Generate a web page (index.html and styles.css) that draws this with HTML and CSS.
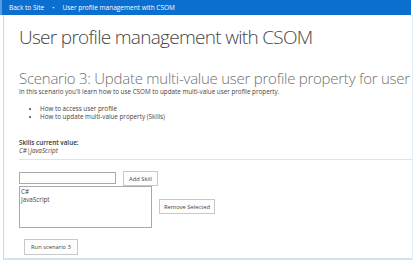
FILE: index.html
```html
<!DOCTYPE html>
<html>
<head>
<meta charset="utf-8">
<link rel="stylesheet" href="styles.css">
</head>
<body>
<div class="topbar">
  <span class="crumb">Back to Site</span>
  <span class="sep">•</span>
  <span class="crumb">User profile management with CSOM</span>
</div>
<div class="page">
  <h1 class="title">User profile management with CSOM</h1>
  <h2 class="scenario">Scenario 3: Update multi-value user profile property for user</h2>
  <p class="intro">In this scenario you'll learn how to use CSOM to update multi-value user profile property.</p>
  <ul class="points">
    <li>How to access user profile</li>
    <li>How to update multi-value property (Skills)</li>
  </ul>
  <div class="current">
    <div class="label">Skills current value:</div>
    <div class="value">C#|JavaScript</div>
  </div>
  <div class="editor">
    <div class="row">
      <input class="skill-input" type="text">
      <button class="btn">Add Skill</button>
    </div>
    <div class="row list-row">
      <div class="listbox">
        <div class="item">C#</div>
        <div class="item">JavaScript</div>
      </div>
      <button class="btn remove">Remove Selected</button>
    </div>
  </div>
  <div class="run">
    <button class="btn run-btn">Run scenario 3</button>
  </div>
</div>
</body>
</html>
```

FILE: styles.css
```css
html, body {
  margin: 0;
  padding: 0;
  background: #ffffff;
}
body {
  width: 415px;
  height: 263px;
  overflow: hidden;
  font-family: "Open Sans", "Liberation Sans", sans-serif;
  color: #444444;
}
.topbar {
  width: 402px;
  height: 15px;
  background: #0b6fcf;
  border-left: 2px solid #5a9be0;
  padding-left: 7px;
  display: flex;
  align-items: center;
  gap: 6px;
  font-size: 6.5px;
  color: #ffffff;
}
.sep {
  font-size: 6px;
  padding: 0 2px;
}
.page {
  margin-left: 3px;
  width: 393px;
  height: 243px;
  border-left: 1px solid #c3d9ef;
  border-right: 1px solid #e3eef8;
  border-bottom: 2px solid #d3e2f0;
  padding-left: 15px;
  overflow: hidden;
}
.title {
  margin: 10px 0 0 0;
  font-size: 19px;
  letter-spacing: -0.7px;
  font-weight: 300;
  line-height: 24px;
  color: #444444;
  white-space: nowrap;
}
.scenario {
  margin: 20px 0 0 0;
  font-size: 15px;
  letter-spacing: -0.25px;
  font-weight: 300;
  line-height: 18px;
  color: #6f6f6f;
  white-space: nowrap;
}
.intro {
  margin: 0;
  font-size: 6.3px;
  line-height: 9px;
  color: #444444;
}
.points {
  margin: 9px 0 0 0;
  padding-left: 21px;
  font-size: 6.3px;
  line-height: 8px;
  color: #444444;
}
.current {
  margin-top: 18px;
  padding-bottom: 4px;
  border-bottom: 1px solid #e2e2e2;
  font-size: 6.3px;
  line-height: 8px;
}
.label {
  font-weight: 600;
  color: #333333;
}
.value {
  font-style: italic;
  color: #444444;
}
.editor {
  margin-top: 11px;
  display: flex;
  flex-direction: column;
}
.row {
  display: flex;
  align-items: flex-start;
}
.skill-input {
  box-sizing: border-box;
  width: 97px;
  height: 12px;
  margin: 1px 0 0 0;
  padding: 0;
  border: 1px solid #a9a9a9;
  background: #ffffff;
}
.btn {
  box-sizing: border-box;
  font-family: "Open Sans", "Liberation Sans", sans-serif;
  font-size: 5.8px;
  color: #444444;
  background: #fdfdfd;
  border: 1px solid #c8c8c8;
  padding: 0 5px;
  height: 15px;
  margin-left: 7px;
  white-space: nowrap;
}
.listbox {
  box-sizing: border-box;
  width: 133px;
  height: 42px;
  border: 1px solid #a9a9a9;
  padding: 1px 1px;
  font-size: 6.3px;
  line-height: 8px;
}
.list-row {
  margin-top: 0;
}
.remove {
  margin-top: 13px;
  padding: 0 4px;
}
.run {
  margin-top: 4px;
  padding-left: 5px;
}
.run-btn {
  margin-left: 0;
  height: 16px;
  padding: 0 6px;
}
```
